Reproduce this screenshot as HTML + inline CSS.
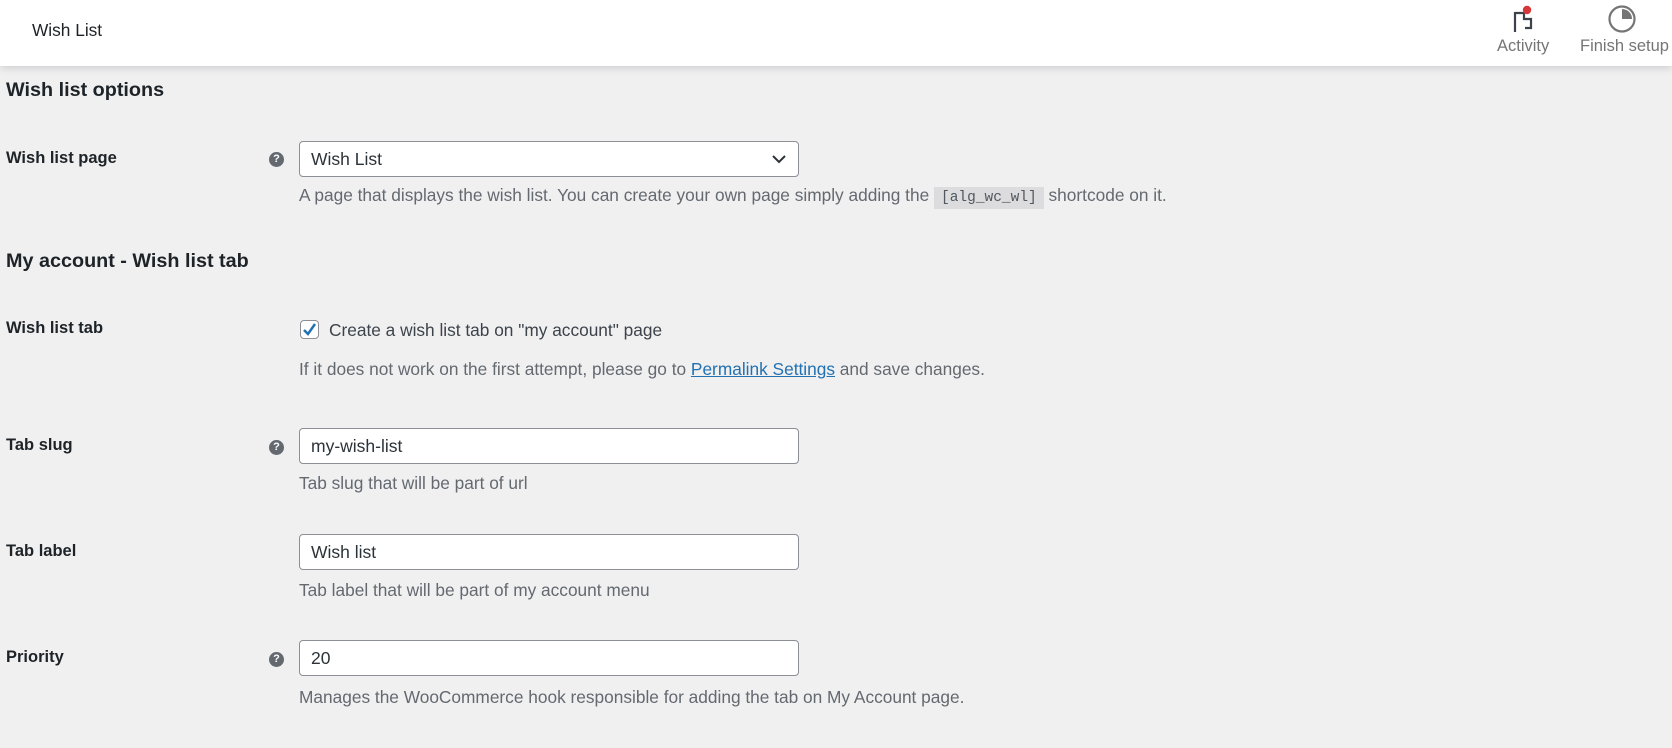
<!DOCTYPE html>
<html><head><meta charset="utf-8"><style>
*{margin:0;padding:0;box-sizing:border-box}
body{width:1672px;height:748px;background:#f0f0f1;font-family:"Liberation Sans",sans-serif;color:#1d2327;position:relative;overflow:hidden;font-size:16px}
.hdr{position:absolute;left:0;top:0;width:1672px;height:66px;background:#fff;box-shadow:0 2px 8px rgba(0,0,0,.15)}
.a{position:absolute;white-space:nowrap}
.h2{font-size:19.8px;font-weight:600;color:#1d2327}
.lbl{font-weight:600;font-size:16.5px;left:6px}
.desc{color:#646970;font-size:17.3px;left:299px}
.inp{position:absolute;left:299px;width:500px;height:36px;background:#fff;border:1px solid #8c8f94;border-radius:4px;padding:7px 11px;font-size:17.5px;color:#2c3338}
.help{position:absolute;left:269px;width:15px;height:15px;border-radius:50%;background:#646970;color:#fff;font-size:11px;font-weight:bold;text-align:center;line-height:15px}
code{font-family:"Liberation Mono",monospace;background:#dcdcde;color:#50575e;font-size:14.5px;padding:3px 7px}
a{color:#2271b1}
</style></head><body>
<div class="hdr">
 <div class="a" style="left:32px;top:20px;font-size:17.3px;color:#1d2327">Wish List</div>
 <svg class="a" style="left:1510px;top:4px" width="28" height="28" viewBox="0 0 28 28"><path d="M5 8v20M5 9h9v6h7v9h-6" fill="none" stroke="#3c434a" stroke-width="2.2"/><circle cx="17" cy="6" r="4.2" fill="#d63638"/></svg>
 <div class="a" style="left:1497px;top:37px;font-size:16.5px;color:#757575">Activity</div>
 <svg class="a" style="left:1607px;top:4px" width="30" height="30" viewBox="0 0 30 30"><circle cx="15" cy="15" r="12.5" fill="none" stroke="#757575" stroke-width="2.2"/><path d="M15 5a10 10 0 0 1 10 10h-10z" fill="#757575"/></svg>
 <div class="a" style="left:1580px;top:37px;font-size:16.5px;color:#757575">Finish setup</div>
</div>
<div class="a h2" style="left:6px;top:79px">Wish list options</div>
<div class="a lbl" style="top:149px">Wish list page</div>
<div class="help" style="top:152px">?</div>
<div class="inp" style="top:141px">Wish List<svg style="position:absolute;right:12px;top:13px" width="14" height="9" viewBox="0 0 14 9"><path d="M1 1l6 6 6-6" fill="none" stroke="#2c3338" stroke-width="2"/></svg></div>
<div class="a desc" style="top:185px">A page that displays the wish list. You can create your own page simply adding the <code>[alg_wc_wl]</code> shortcode on it.</div>
<div class="a h2" style="left:6px;top:250px">My account - Wish list tab</div>
<div class="a lbl" style="top:319px">Wish list tab</div>
<div class="a" style="left:300px;top:320px;width:19px;height:19px;border:1px solid #8c8f94;border-radius:4px;background:#fff"><svg width="17" height="17" viewBox="0 0 17 17" style="position:absolute;left:0;top:0"><path d="M3 9l4 4 7-10" fill="none" stroke="#2271b1" stroke-width="2.5"/></svg></div>
<div class="a" style="left:329px;top:320px;font-size:17.3px;color:#3c434a">Create a wish list tab on "my account" page</div>
<div class="a desc" style="top:359px">If it does not work on the first attempt, please go to <a href="#">Permalink Settings</a> and save changes.</div>
<div class="a lbl" style="top:436px">Tab slug</div>
<div class="help" style="top:440px">?</div>
<div class="inp" style="top:428px">my-wish-list</div>
<div class="a desc" style="top:473px">Tab slug that will be part of url</div>
<div class="a lbl" style="top:542px">Tab label</div>
<div class="inp" style="top:534px">Wish list</div>
<div class="a desc" style="top:580px">Tab label that will be part of my account menu</div>
<div class="a lbl" style="top:648px">Priority</div>
<div class="help" style="top:652px">?</div>
<div class="inp" style="top:640px">20</div>
<div class="a desc" style="top:687px">Manages the WooCommerce hook responsible for adding the tab on My Account page.</div>
</body></html>
